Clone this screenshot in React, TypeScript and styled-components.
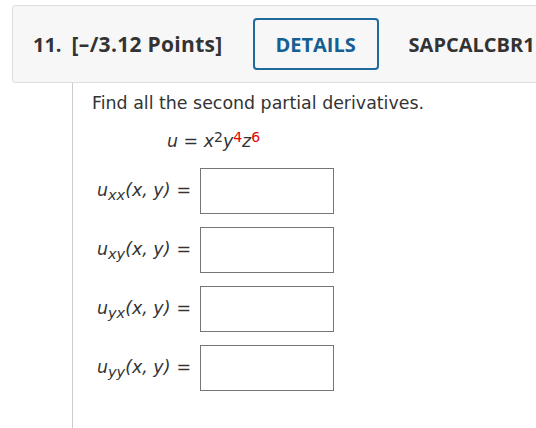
import React from "react";
import styled, { createGlobalStyle } from "styled-components";

const Global = createGlobalStyle`
  html, body { margin: 0; padding: 0; background: #ffffff; }
  body { width: 536px; height: 428px; overflow: hidden; }
`;

const Page = styled.div`
  width: 536px;
  height: 428px;
  overflow: hidden;
  padding-top: 5px;
  box-sizing: border-box;
  display: flex;
  flex-direction: column;
`;

const Header = styled.div`
  margin-left: 12px;
  width: 640px;
  height: 78px;
  box-sizing: border-box;
  background: #f7f7f7;
  border: 1px solid #dedede;
  border-radius: 3px;
  display: flex;
  align-items: center;
  padding-left: 20px;
  font-family: "Open Sans", "Liberation Sans", sans-serif;
  font-weight: 700;
  font-size: 20px;
  color: #333333;
  flex-shrink: 0;
`;

const Num = styled.span`
  margin-right: 10px;
`;

const Points = styled.span`
  font-size: 21px;
  letter-spacing: 0.3px;
  margin-right: 30px;
`;

const DetailsButton = styled.div`
  width: 126px;
  height: 52px;
  box-sizing: border-box;
  border: 2px solid #1d6a9b;
  border-radius: 4px;
  display: flex;
  align-items: center;
  justify-content: center;
  color: #155f92;
  margin-right: 30px;
  flex-shrink: 0;
`;

const Code = styled.span`
  white-space: nowrap;
`;

const Body = styled.div`
  margin-left: 72px;
  flex: 1;
  border-left: 1px solid #cccccc;
  padding: 10px 0 0 19px;
  font-family: "DejaVu Sans", Verdana, sans-serif;
  font-size: 17.4px;
  line-height: 20px;
  color: #333333;
`;

const Prompt = styled.div``;

const Math = styled.span`
  font-family: "DejaVu Sans", Verdana, sans-serif;
  font-style: oblique 12deg;
  font-synthesis: weight style;
`;

const Equation = styled.div`
  margin: 16px 0 0 75px;
  line-height: 24px;
  white-space: nowrap;
`;

const Sup = styled.sup<{ $red?: boolean }>`
  font-size: 14px;
  line-height: 0;
  font-style: normal;
  vertical-align: 5px;
  color: ${(p) => (p.$red ? "#e60000" : "inherit")};
`;

const Grid = styled.div`
  margin-top: 15px;
  margin-left: 5px;
  display: grid;
  grid-template-columns: 103px 134px;
  grid-auto-rows: 46px;
  row-gap: 13px;
`;

const Label = styled.div`
  display: flex;
  align-items: center;
  white-space: nowrap;
  padding-bottom: 2px;
`;

const Sub = styled.sub`
  font-size: 14.5px;
  line-height: 0;
  vertical-align: -4px;
`;

const Eq = styled.span<{ $gap?: number }>`
  font-style: normal;
  margin-left: ${(p) => p.$gap ?? 0}px;
  margin-right: ${(p) => p.$gap ?? 0}px;
`;

const Input = styled.div`
  box-sizing: border-box;
  border: 1px solid #767676;
  background: #ffffff;
`;

const rows = ["xx", "xy", "yx", "yy"];

export default function App() {
  return (
    <>
      <Global />
      <Page>
        <Header>
          <Num>11.</Num>
          <Points>[–/3.12 Points]</Points>
          <DetailsButton>DETAILS</DetailsButton>
          <Code>SAPCALCBR1 15.3.003.</Code>
        </Header>
        <Body>
          <Prompt>Find all the second partial derivatives.</Prompt>
          <Equation>
            <Math>u</Math>
            <Eq> = </Eq>
            <Math>
              x<Sup>2</Sup>y<Sup $red>4</Sup>z<Sup $red>6</Sup>
            </Math>
          </Equation>
          <Grid>
            {rows.map((r) => (
              <React.Fragment key={r}>
                <Label>
                  <Math>
                    u<Sub>{r}</Sub>(x, y)
                  </Math>
                  <Eq $gap={6}>=</Eq>
                </Label>
                <Input />
              </React.Fragment>
            ))}
          </Grid>
        </Body>
      </Page>
    </>
  );
}
